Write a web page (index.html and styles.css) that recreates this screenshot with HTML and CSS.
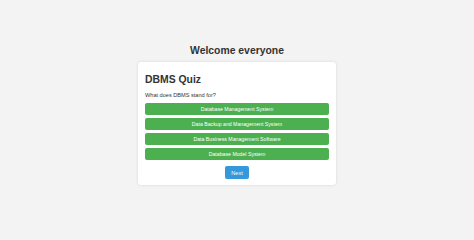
FILE: index.html
```html
<!DOCTYPE html>
<html lang="en">
<head>
<meta charset="utf-8">
<title>DBMS Quiz</title>
<link rel="stylesheet" href="styles.css">
</head>
<body>
  <main class="page">
    <h1 class="title">Welcome everyone</h1>
    <section class="card">
      <h2 class="quiz-title">DBMS Quiz</h2>
      <p class="question">What does DBMS stand for?</p>
      <div class="options">
        <button class="option">Database Management System</button>
        <button class="option">Data Backup and Management System</button>
        <button class="option">Data Business Management Software</button>
        <button class="option">Database Model System</button>
      </div>
      <div class="actions">
        <button class="next">Next</button>
      </div>
    </section>
  </main>
</body>
</html>
```

FILE: styles.css
```css
html, body {
  margin: 0;
  padding: 0;
}

body {
  background: #f3f3f3;
  font-family: "Liberation Sans", Arial, sans-serif;
  color: #333;
  width: 474px;
  height: 225px;
}

.page {
  display: flex;
  flex-direction: column;
  align-items: center;
  padding-top: 45px;
}

.title {
  margin: 0;
  font-size: 10.4px;
  line-height: 12px;
  font-weight: bold;
  color: #333;
}

.card {
  margin-top: 5px;
  width: 198px;
  box-sizing: border-box;
  background: #fff;
  border-radius: 3px;
  box-shadow: 0 0 3px rgba(0, 0, 0, 0.12);
  padding: 12px 7px 6px;
  display: flex;
  flex-direction: column;
}

.quiz-title {
  margin: 0;
  font-size: 10.4px;
  line-height: 12px;
  font-weight: bold;
  color: #333;
}

.question {
  margin: 5px 0 4px;
  font-size: 5.6px;
  line-height: 8px;
  color: #333;
}

.options {
  display: flex;
  flex-direction: column;
  gap: 3px;
}

.option {
  height: 12px;
  border: none;
  border-radius: 2px;
  background: #4caf50;
  color: #fff;
  font-family: "Liberation Sans", Arial, sans-serif;
  font-size: 5.2px;
  padding: 0;
  margin: 0;
}

.actions {
  display: flex;
  justify-content: center;
  margin-top: 6px;
}

.next {
  width: 24px;
  height: 13px;
  border: none;
  border-radius: 2px;
  background: #3498db;
  color: #fff;
  font-family: "Liberation Sans", Arial, sans-serif;
  font-size: 5.6px;
  padding: 0;
  margin: 0;
}
```
